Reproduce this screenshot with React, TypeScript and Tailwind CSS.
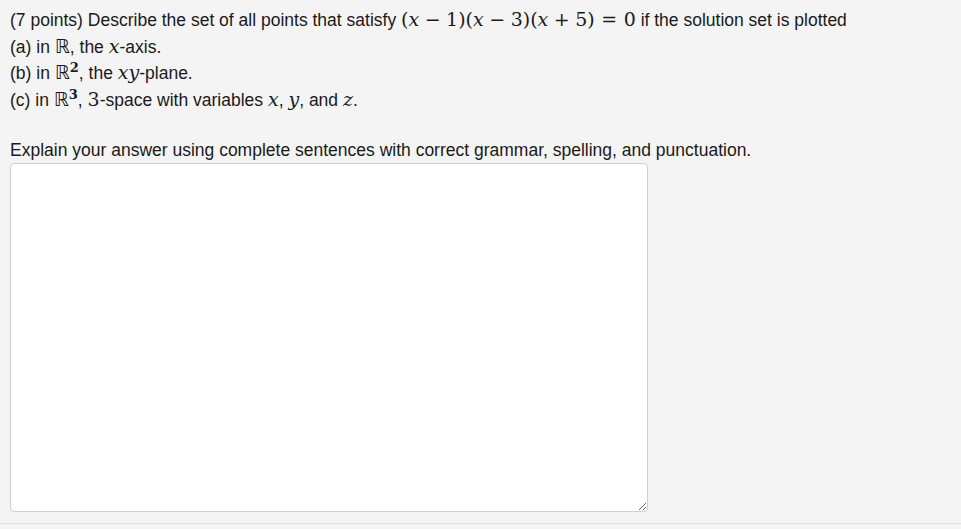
import React from "react";

const serif = '"DejaVu Serif", "Liberation Serif", serif';
const M = ({ children }: { children: React.ReactNode }) => (
  <span className="italic" style={{ fontFamily: serif }}>{children}</span>
);
const N = ({ children }: { children: React.ReactNode }) => (
  <span className="not-italic" style={{ fontFamily: serif }}>{children}</span>
);
const Op = ({ children }: { children: React.ReactNode }) => (
  <span className="not-italic mx-[5.5px]" style={{ fontFamily: serif }}>{children}</span>
);
const Rel = ({ children }: { children: React.ReactNode }) => (
  <span className="not-italic mx-[6.5px]" style={{ fontFamily: serif }}>{children}</span>
);
const R = () => <span className="text-[19px] leading-none" style={{ fontFamily: '"DejaVu Sans", serif' }}>ℝ</span>;
const Sup = ({ children }: { children: React.ReactNode }) => (
  <span className="relative -top-[7px] text-[13px] leading-none font-semibold" style={{ fontFamily: serif }}>{children}</span>
);
const MS = ({ children }: { children: React.ReactNode }) => (
  <span className="text-[19px] leading-none">{children}</span>
);

export default function App() {
  return (
    <div className="w-[961px] h-[529px] bg-[#f4f4f4] font-['Liberation_Sans',Arial,sans-serif] text-[#1a1a1a] text-[17.5px] overflow-hidden">
      <div className="h-[524px] border-b border-[#dedede] pl-[10px] pt-[7px]">
        <div className="leading-[26.5px]">
          <div className="whitespace-nowrap">
            (7 points) Describe the set of all points that satisfy{" "}
            <MS>
              <N>(</N><M>x</M><Op>−</Op><N>1)(</N><M>x</M><Op>−</Op><N>3)(</N><M>x</M><Op>+</Op><N>5)</N><Rel>=</Rel><N>0</N>
            </MS>{" "}
            if the solution set is plotted
          </div>
          <div>(a) in <R />, the <MS><M>x</M></MS>-axis.</div>
          <div>(b) in <R /><Sup>2</Sup>, the <MS><M>xy</M></MS>-plane.</div>
          <div>(c) in <R /><Sup>3</Sup>, <MS><N>3</N></MS>-space with variables <MS><M>x</M></MS>, <MS><M>y</M></MS>, and <MS><M>z</M></MS>.</div>
        </div>
        <div className="mt-[27px] leading-[20px]">Explain your answer using complete sentences with correct grammar, spelling, and punctuation.</div>
        <textarea className="mt-[3px] block w-[638px] h-[349px] bg-white border border-[#cfcfcf] rounded-[4px] outline-none" />
      </div>
    </div>
  );
}
